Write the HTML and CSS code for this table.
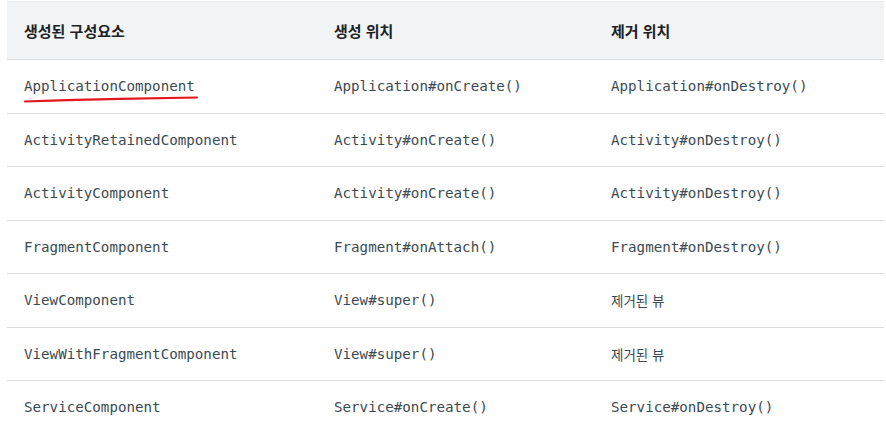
FILE: index.html
```html
<!DOCTYPE html>
<html lang="ko">
<head>
<meta charset="utf-8">
<link rel="stylesheet" href="styles.css">
</head>
<body>
<div class="wrap">
<table class="tbl">
  <thead>
    <tr><th class="c1">생성된 구성요소</th><th class="c2">생성 위치</th><th class="c3">제거 위치</th></tr>
  </thead>
  <tbody>
    <tr><td><code>ApplicationComponent</code></td><td><code>Application#onCreate()</code></td><td><code>Application#onDestroy()</code></td></tr>
    <tr><td><code>ActivityRetainedComponent</code></td><td><code>Activity#onCreate()</code></td><td><code>Activity#onDestroy()</code></td></tr>
    <tr><td><code>ActivityComponent</code></td><td><code>Activity#onCreate()</code></td><td><code>Activity#onDestroy()</code></td></tr>
    <tr><td><code>FragmentComponent</code></td><td><code>Fragment#onAttach()</code></td><td><code>Fragment#onDestroy()</code></td></tr>
    <tr><td><code>ViewComponent</code></td><td><code>View#super()</code></td><td class="ko">제거된 뷰</td></tr>
    <tr><td><code>ViewWithFragmentComponent</code></td><td><code>View#super()</code></td><td class="ko">제거된 뷰</td></tr>
    <tr><td><code>ServiceComponent</code></td><td><code>Service#onCreate()</code></td><td><code>Service#onDestroy()</code></td></tr>
  </tbody>
</table>
<svg class="mark" width="886" height="431" viewBox="0 0 886 431"><path d="M25 101.5 Q80 99.5 120 98.8 T197 97.5" fill="none" stroke="#e3171b" stroke-width="2.2" stroke-linecap="round"/></svg>
</div>
</body>
</html>
```
FILE: styles.css
```css
html, body { margin: 0; padding: 0; background: #fff; }
.wrap { position: relative; width: 886px; height: 431px; overflow: hidden; }
.tbl {
  margin: 1px 0 0 7px;
  width: 877px;
  border-collapse: collapse;
  table-layout: fixed;
  border-top: 1px solid #e8eaed;
}
.c1 { width: 293px; }
.c2 { width: 260px; }
.c3 { width: 273px; }
th {
  background: #f1f3f4;
  height: 57px;
  padding: 0 0 0 17px;
  text-align: left;
  font-family: "Noto Sans CJK KR", "Noto Sans", sans-serif;
  font-weight: 700;
  font-size: 15px;
  color: #202124;
  border-bottom: 1px solid #dadce0;
  vertical-align: middle;
}
td {
  height: 52.5px;
  padding: 0 0 0 17px;
  border-bottom: 1px solid #dadce0;
  vertical-align: middle;
}
code {
  font-family: "DejaVu Sans Mono", monospace;
  font-size: 14.2px;
  color: #3c4a52;
}
.ko {
  font-family: "Noto Sans CJK KR", "Noto Sans", sans-serif;
  font-size: 13.5px;
  color: #3c4a52;
}
.mark { position: absolute; left: 0; top: 0; pointer-events: none; }
```
